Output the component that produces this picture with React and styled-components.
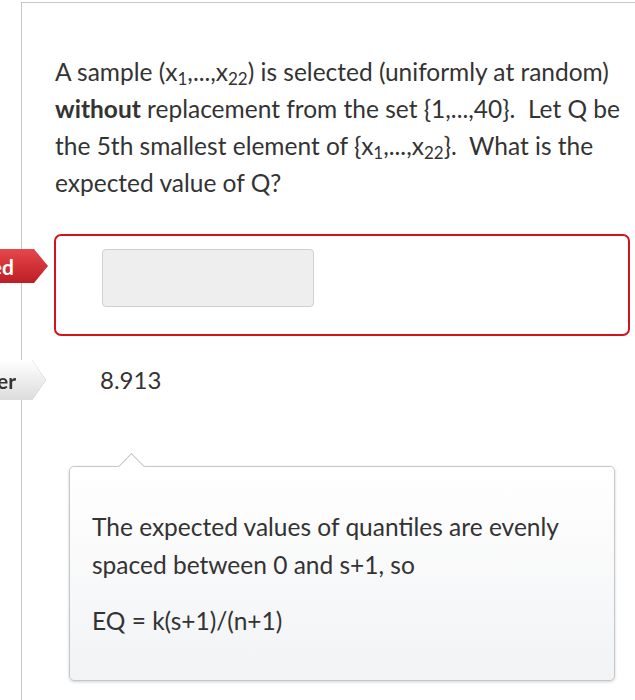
import styled, { createGlobalStyle } from "styled-components";

const GlobalStyle = createGlobalStyle`
  html, body {
    margin: 0;
    padding: 0;
    background: #ffffff;
  }

  body {
    font-family: Lato, "Open Sans", "Liberation Sans", sans-serif;
    color: #333333;
    overflow: hidden;
  }
`;

const Page = styled.div`
  padding-top: 2px;
  height: 698px;
  overflow: hidden;
`;

const Panel = styled.div`
  margin-left: 21px;
  height: 100%;
  border-left: 1px solid #c4c8cc;
  border-top: 1px solid #c4c8cc;
`;

const Question = styled.div`
  padding: 50px 0 0 33px;
  font-size: 24.5px;
  line-height: 37px;

  b {
    font-weight: 700;
  }

  sub {
    font-size: 17px;
    line-height: 0;
    vertical-align: -4px;
  }
`;

const AnswerRow = styled.div`
  position: relative;
  margin-top: ${(p) => p.$top}px;
  margin-left: ${(p) => p.$left}px;
`;

const Tag = styled.div`
  position: absolute;
  top: ${(p) => p.$top}px;
  left: ${(p) => p.$tip - 200}px;
  width: 200px;
  filter: ${(p) => (p.$variant === "wrong" ? "none" : "drop-shadow(0 0 0.6px #9a9a9a)")};
`;

const TagShape = styled.div`
  height: ${(p) => p.$height}px;
  box-sizing: border-box;
  padding-right: ${(p) => p.$pad}px;
  display: flex;
  align-items: center;
  justify-content: flex-end;
  white-space: nowrap;
  font-size: 21px;
  font-weight: 700;
  clip-path: polygon(0 0, calc(100% - 14px) 0, 100% 50%, calc(100% - 14px) 100%, 0 100%);
  background: ${(p) =>
    p.$variant === "wrong"
      ? "linear-gradient(#e5474b, #bd1e24)"
      : "linear-gradient(#ffffff, #dcdcdc)"};
  color: ${(p) => (p.$variant === "wrong" ? "#ffffff" : "#333333")};
`;

const WrongBox = styled.div`
  width: 576px;
  height: 102px;
  box-sizing: border-box;
  border: 2.5px solid #d3141c;
  border-radius: 7px;
  padding: 13px 0 0 46px;
`;

const Input = styled.div`
  width: 212px;
  height: 58px;
  box-sizing: border-box;
  background: #eeeeee;
  border: 1px solid #cfcfcf;
  border-radius: 4px;
`;

const Value = styled.div`
  font-size: 24px;
  line-height: 40px;
  padding-left: 46px;
`;

const Comment = styled.div`
  position: relative;
  margin: 66px 0 0 47px;
  width: 546px;
  box-sizing: border-box;
  padding: 41px 20px 40px 22px;
  border: 1px solid #c4c8cc;
  border-radius: 5px;
  background: linear-gradient(#ffffff, #f2f3f5);
  box-shadow: 0 1px 3px rgba(0, 0, 0, 0.18);
  font-size: 24.5px;
  line-height: 38px;

  &::before {
    content: "";
    position: absolute;
    top: -10px;
    left: 52px;
    width: 18px;
    height: 18px;
    background: #ffffff;
    border-top: 1px solid #c4c8cc;
    border-left: 1px solid #c4c8cc;
    transform: rotate(45deg);
  }

  p {
    margin: 0;
  }

  p + p {
    margin-top: 18px;
  }
`;

export default function App() {
  return (
    <Page>
      <GlobalStyle />
      <Panel>
        <Question>
          A sample (x<sub>1</sub>,...,x<sub>22</sub>) is selected (uniformly at random){" "}
          <b>without</b> replacement from the set {"{1,...,40}"}.&nbsp; Let Q be the 5th
          smallest element of {"{"}x<sub>1</sub>,...,x<sub>22</sub>{"}"}.&nbsp; What is the
          expected value of Q?
        </Question>

        <AnswerRow $top={33} $left={32}>
          <Tag $variant="wrong" $top={15} $tip={-6}>
            <TagShape $variant="wrong" $height={34} $pad={34}>
              Unanswered
            </TagShape>
          </Tag>
          <WrongBox>
            <Input />
          </WrongBox>
        </AnswerRow>

        <AnswerRow $top={24} $left={32}>
          <Tag $variant="right" $top={0} $tip={-8}>
            <TagShape $variant="right" $height={40} $pad={30}>
              Correct Answer
            </TagShape>
          </Tag>
          <Value>8.913</Value>
        </AnswerRow>

        <Comment>
          <p>
            The expected values of quantiles are evenly spaced between 0 and s+1, so
          </p>
          <p>EQ = k(s+1)/(n+1)</p>
        </Comment>
      </Panel>
    </Page>
  );
}
